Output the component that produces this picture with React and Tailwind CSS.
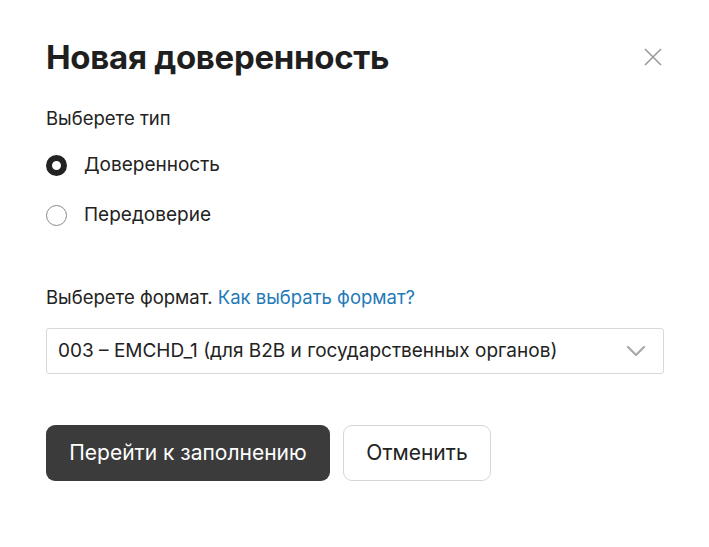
import React, { useState } from "react";

const Radio = ({ checked, label, onClick }) => (
  <button onClick={onClick} className="flex items-center gap-[17px] text-left h-[24px]">
    {checked ? (
      <span className="w-[21px] h-[21px] rounded-full border-[6px] border-[#222] bg-white" />
    ) : (
      <span className="w-[21px] h-[21px] rounded-full border border-[#8a8a8a] bg-white" />
    )}
    <span className="text-[19px] leading-[24px] text-[#222]">{label}</span>
  </button>
);

export default function App() {
  const [type, setType] = useState("proxy");

  return (
    <div className="w-[709px] h-[547px] bg-white font-['Inter',sans-serif] text-[#222]">
      <div className="px-[46px] pt-[38px]">
        {/* Header */}
        <div className="flex items-start justify-between">
          <h1 className="text-[33px] font-bold leading-[38px] tracking-[-0.3px] text-[#1f1f1f]">
            Новая доверенность
          </h1>
          <button className="mt-[9px] text-[#9a9a9a]">
            <svg width="20" height="20" viewBox="0 0 20 20" fill="none" stroke="currentColor" strokeWidth="1.6">
              <path d="M2 2L18 18M18 2L2 18" />
            </svg>
          </button>
        </div>

        <p className="mt-[30px] text-[18.5px] leading-[24px]">Выберете тип</p>

        <div className="mt-[23px] flex flex-col gap-[26px]">
          <Radio checked={type === "proxy"} label="Доверенность" onClick={() => setType("proxy")} />
          <Radio checked={type === "sub"} label="Передоверие" onClick={() => setType("sub")} />
        </div>

        <p className="mt-[58px] text-[18.5px] leading-[24px]">
          Выберете формат. <a href="#" className="text-[#1f7ab8]">Как выбрать формат?</a>
        </p>

        <div className="mt-[19px] h-[46px] w-[618px] flex items-center justify-between border border-[#d8d8d8] rounded-[3px] pl-[11px] pr-[17px]">
          <span className="text-[19px] leading-[24px]">003 – EMCHD_1 (для B2B и государственных органов)</span>
          <svg width="20" height="12" viewBox="0 0 20 12" fill="none" stroke="#a8a8a8" strokeWidth="2.2" strokeLinecap="round" strokeLinejoin="round">
            <path d="M2 2L10 10L18 2" />
          </svg>
        </div>

        <div className="mt-[51px] flex gap-[13px]">
          <button className="h-[56px] w-[284px] rounded-[9px] bg-[#3b3b3b] text-white text-[21px]">
            Перейти к заполнению
          </button>
          <button className="h-[56px] w-[148px] rounded-[9px] border border-[#d6d6d6] bg-white text-[21px] text-[#222]">
            Отменить
          </button>
        </div>
      </div>
    </div>
  );
}
